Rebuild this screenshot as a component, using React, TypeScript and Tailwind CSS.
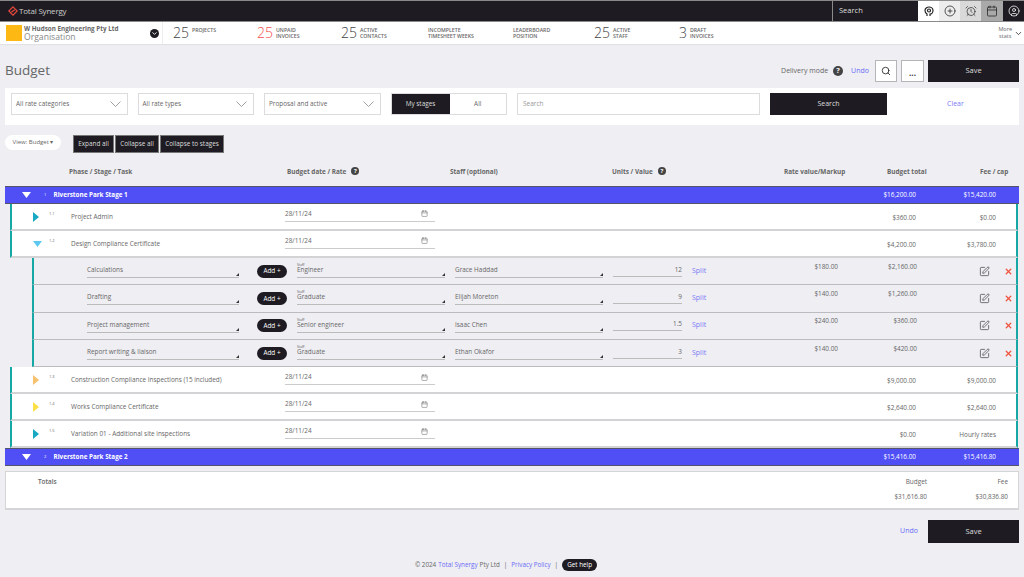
import { AlarmClock, Calendar, ChevronDown, CirclePlus, CircleUser, Search, SquarePen, X } from "lucide-react";

const FONT = "font-['Open_Sans',sans-serif]";

const STATS = [
  { value: "25", line1: "PROJECTS", line2: "", w: "w-[84px]", red: false },
  { value: "25", line1: "UNPAID", line2: "INVOICES", w: "w-[84px]", red: true },
  { value: "25", line1: "ACTIVE", line2: "CONTACTS", w: "w-[87px]", red: false },
  { value: "", line1: "INCOMPLETE", line2: "TIMESHEET WEEKS", w: "w-[85px]", red: false },
  { value: "", line1: "LEADERBOARD", line2: "POSITION", w: "w-[81px]", red: false },
  { value: "25", line1: "ACTIVE", line2: "STAFF", w: "w-[85px]", red: false },
  { value: "3", line1: "DRAFT", line2: "INVOICES", w: "w-[85px]", red: false },
];

const TASKS = [
  { name: "Calculations", role: "Engineer", person: "Grace Haddad", units: "12", rate: "$180.00", total: "$2,160.00" },
  { name: "Drafting", role: "Graduate", person: "Elijah Moreton", units: "9", rate: "$140.00", total: "$1,260.00" },
  { name: "Project management", role: "Senior engineer", person: "Isaac Chen", units: "1.5", rate: "$240.00", total: "$360.00" },
  { name: "Report writing & liaison", role: "Graduate", person: "Ethan Okafor", units: "3", rate: "$140.00", total: "$420.00" },
];

function Arrow({ color, open }: { color: string; open?: boolean }) {
  if (open) {
    return (
      <svg width="9" height="6" viewBox="0 0 9 6" className="block">
        <path d="M0 0h9L4.5 6z" fill={color} />
      </svg>
    );
  }
  return (
    <svg width="6" height="10" viewBox="0 0 6 10" className="block">
      <path d="M0 0l6 5-6 5z" fill={color} />
    </svg>
  );
}

function HelpDot({ size = "small" }: { size?: "small" | "large" }) {
  return (
    <span
      className={`inline-flex shrink-0 items-center justify-center rounded-full bg-[#444] font-bold leading-none text-white ${
        size === "large" ? "h-[10px] w-[10px] text-[7.5px]" : "h-[8px] w-[8px] text-[6px]"
      }`}
    >
      ?
    </span>
  );
}

function Select({ label }: { label: string }) {
  return (
    <div className="flex h-[22px] w-[116.5px] items-center justify-between border border-[#dcdcdf] bg-white pl-[4px] pr-[6px] text-[6.4px] text-[#666]">
      <span>{label}</span>
      <svg width="11" height="6" viewBox="0 0 11 6" fill="none" stroke="#888" strokeWidth="0.8">
        <path d="M.5.5l5 5 5-5" />
      </svg>
    </div>
  );
}

function Corner() {
  return <span className="absolute bottom-[1px] right-0 h-0 w-0 border-b-[3px] border-l-[3px] border-b-[#333] border-l-transparent" />;
}

function StageRow({ num, title, total, fee }: { num: string; title: string; total: string; fee: string }) {
  return (
    <div className="flex h-[18px] w-[1014px] items-center border-y border-[#55556a] bg-[#4f4ff5] text-white">
      <span className="ml-[17px] w-[22px]">
        <Arrow color="#fff" open />
      </span>
      <span className="w-[9.5px] text-[4px]">{num}</span>
      <span className="w-[818.5px] text-[6.3px] font-bold">{title}</span>
      <span className="w-[44px] text-right text-[6.4px]">{total}</span>
      <span className="w-[80px] text-right text-[6.4px]">{fee}</span>
    </div>
  );
}

function PhaseRow(props: { num: string; title: string; color: string; open?: boolean; total: string; fee: string }) {
  return (
    <div className="ml-[10px] flex h-[27px] w-[1008px] items-center border-x-2 border-b-2 border-x-[#17a8a6] border-b-[#d3d3d6] bg-white text-[6.4px] text-[#666]">
      <span className="ml-[21px] w-[16px]">
        <Arrow color={props.color} open={props.open} />
      </span>
      <span className="mb-[5px] w-[22px] text-[4px]">{props.num}</span>
      <span className="mt-[1px] w-[214px]">{props.title}</span>
      <div className="mb-[2px] flex w-[150px] items-center justify-between border-b border-[#ccc] pb-[2px]">
        <span>28/11/24</span>
        <Calendar size={7} className="mr-[7px] text-[#777]" />
      </div>
      <span className="mt-[3px] w-[481px] text-right">{props.total}</span>
      <span className="mt-[3px] w-[80px] text-right">{props.fee}</span>
    </div>
  );
}

function TaskRow({ name, role, person, units, rate, total }: (typeof TASKS)[number]) {
  return (
    <div className="ml-[32px] flex h-[27.3px] w-[986px] items-center border-x-2 border-b border-x-[#17a8a6] border-b-[#bcbcc0] text-[6.4px] text-[#666]">
      <div className="relative ml-[53px] mt-[1px] flex h-[13px] w-[152px] items-start border-b border-[#bbb]">
        {name}
        <Corner />
      </div>
      <button className="ml-[18px] h-[13px] w-[30px] rounded-full bg-[#1e1c22] text-[6.4px] text-white">Add +</button>
      <div className="relative ml-[10px] mt-[1px] h-[13px] w-[148px] border-b border-[#bbb] leading-[10px]">
        <span className="absolute -top-[3px] left-0 text-[3.5px] leading-[5px]">Staff</span>
        {role}
        <Corner />
      </div>
      <div className="relative ml-[10px] mt-[1px] h-[13px] w-[148px] border-b border-[#bbb] leading-[10px]">
        {person}
        <Corner />
      </div>
      <div className="mb-[1px] ml-[10px] h-[12px] w-[69px] border-b border-[#bbb] text-right leading-[10px]">{units}</div>
      <span className="ml-[10px] w-[29px] text-[7px] text-[#7b7bf5]">Split</span>
      <span className="mb-[9px] w-[117px] text-right">{rate}</span>
      <span className="mb-[9px] w-[79px] text-right">{total}</span>
      <SquarePen size={11} strokeWidth={1.6} className="ml-[62px] text-[#444]" />
      <X size={9} strokeWidth={3.5} className="ml-[14px] text-[#f0553f]" />
    </div>
  );
}

export default function App() {
  return (
    <div className={`${FONT} h-[577px] w-[1024px] overflow-hidden bg-[#eeeef3] text-[#666]`}>
      <header className="flex h-[22px] items-stretch border-y border-[#8a8a8a] bg-[#1e1c22] text-[#ddd]">
        <div className="ml-[8px] flex items-center gap-[1px] text-[8px] tracking-tight text-[#ccc]">
          <svg width="10" height="10" viewBox="0 0 10 10" fill="none" stroke="#e5483d" strokeWidth="1.2">
            <path d="M5 .8L9.2 5 5 9.2.8 5z" />
            <path d="M3.3 6.2L6.7 3.8" />
          </svg>
          Total Synergy
        </div>
        <div className="ml-auto flex w-[86px] items-center border-l border-[#8a8a8a] pl-[6px] text-[7.5px]">Search</div>
        <div className="flex w-[21px] items-center justify-center bg-white text-[#222]">
          <svg width="10" height="11" viewBox="0 0 10 11" fill="none" stroke="currentColor" strokeWidth="1.2">
            <path d="M3 10V8C1.5 7 1 5.8 1 4.5 1 2.5 3 1 5 1s4 1.5 4 3.5C9 6.5 7.5 8 6 8v2" />
            <circle cx="5" cy="4.5" r="1.5" />
          </svg>
        </div>
        <div className="flex w-[21px] items-center justify-center bg-[#ececec] text-[#222]">
          <CirclePlus size={12} strokeWidth={1.5} />
        </div>
        <div className="flex w-[21px] items-center justify-center bg-[#d9d9d9] text-[#333]">
          <AlarmClock size={12} strokeWidth={1.5} />
        </div>
        <div className="flex w-[22px] items-center justify-center bg-[#a9a9a9] text-[#222]">
          <Calendar size={12} strokeWidth={1.5} />
        </div>
        <div className="flex w-[21px] items-center justify-center bg-[#1e1c22] text-white">
          <CircleUser size={12} strokeWidth={1.5} />
        </div>
      </header>

      <div className="flex h-[22px] items-center bg-white shadow-[0_1px_1px_#e2e2e6]">
        <div className="ml-[6px] h-[16px] w-[16px] bg-[#fdb813]" />
        <div className="ml-[2px] w-[126px]">
          <div className="text-[6.3px] font-bold leading-[7px] text-[#666]">W Hudson Engineering Pty Ltd</div>
          <div className="text-[8.6px] leading-[10px] text-[#888]">Organisation</div>
        </div>
        <span className="flex h-[9px] w-[9px] items-center justify-center rounded-full bg-[#1e1c22] text-white">
          <ChevronDown size={7} strokeWidth={3} />
        </span>
        <div className="ml-[3px] flex h-full items-center border-l border-[#eee] pl-[10px]">
          {STATS.map((s) => (
            <div key={s.line1 + s.line2} className={`flex ${s.w} items-center gap-[3px]`}>
              {s.value && (
                <span className={`text-[14px] font-light leading-none ${s.red ? "text-[#f4504f]" : "text-[#444]"}`}>{s.value}</span>
              )}
              <span className={`whitespace-nowrap text-[5.2px] font-semibold leading-[6px] text-[#666] ${s.line2 ? "" : "mb-[6px]"}`}>
                {s.line1}
                {s.line2 && <br />}
                {s.line2}
              </span>
            </div>
          ))}
        </div>
        <div className="ml-auto flex items-center pr-[1px]">
          <span className="text-center text-[5.5px] leading-[7.5px] text-[#666]">
            More
            <br />
            stats
          </span>
          <ChevronDown size={9} strokeWidth={2} className="ml-[2px] text-[#222]" />
        </div>
      </div>

      <div className="flex h-[44px] items-end pl-[5px] pr-[5px]">
        <h1 className="mb-[8px] text-[13.5px] text-[#666]">Budget</h1>
        <div className="mb-[6px] ml-auto flex items-center">
          <span className="text-[7px] text-[#666]">Delivery mode</span>
          <span className="ml-[5px] flex">
            <HelpDot size="large" />
          </span>
          <span className="ml-[8px] text-[7px] text-[#6b6bf5]">Undo</span>
          <div className="ml-[6px] flex h-[22px] w-[22px] items-center justify-center border border-[#b5b5b8] bg-white">
            <Search size={10} strokeWidth={2} className="text-[#222]" />
          </div>
          <div className="ml-[4px] flex h-[22px] w-[23px] items-center justify-center border border-[#b5b5b8] bg-white pt-[3px] text-[8px] font-bold text-[#333]">
            ...
          </div>
          <button className="ml-[4px] h-[22px] w-[91px] bg-[#1e1c22] text-[7.5px] text-[#ddd]">Save</button>
        </div>
      </div>

      <div className="mx-[5px] flex h-[37px] items-start bg-white pl-[6px] pt-[5px]">
        <Select label="All rate categories" />
        <span className="ml-[10px]">
          <Select label="All rate types" />
        </span>
        <span className="ml-[10px]">
          <Select label="Proposal and active" />
        </span>
        <div className="ml-[10px] flex h-[22px] w-[116.5px] border border-[#dcdcdf] text-[6.4px]">
          <span className="flex w-[58px] items-center justify-center bg-[#1e1c22] text-[#ddd]">My stages</span>
          <span className="flex flex-1 items-center justify-center text-[#666]">All</span>
        </div>
        <div className="ml-[10px] flex h-[22px] w-[243px] items-center border border-[#dcdcdf] pl-[5px] text-[6.5px] text-[#999]">Search</div>
        <button className="ml-[10px] h-[22px] w-[117px] bg-[#1e1c22] text-[7px] text-[#ddd]">Search</button>
        <span className="ml-[60px] mt-[6px] text-[7px] text-[#7b7bf5]">Clear</span>
      </div>

      <div className="ml-[5px] mt-[10px] flex h-[18px] items-start">
        <span className="flex h-[15px] w-[56px] items-center justify-center rounded-full bg-white text-[6px] text-[#666]">View: Budget ▾</span>
        <div className="ml-[12px] flex gap-[1px]">
          <button className="h-[18px] w-[41px] border border-[#777] bg-[#1e1c22] text-[6.4px] text-[#ddd]">Expand all</button>
          <button className="h-[18px] w-[44px] border border-[#777] bg-[#1e1c22] text-[6.4px] text-[#ddd]">Collapse all</button>
          <button className="h-[18px] w-[64px] border border-[#777] bg-[#1e1c22] text-[6.4px] text-[#ddd]">Collapse to stages</button>
        </div>
      </div>

      <div className="flex h-[33px] items-center whitespace-nowrap pl-[69px] pt-[4px] text-[6.4px] font-bold text-[#666]">
        <span className="w-[218px]">Phase / Stage / Task</span>
        <span className="flex w-[163px] items-center gap-[5px]">
          Budget date / Rate <HelpDot />
        </span>
        <span className="w-[162px]">Staff (optional)</span>
        <span className="flex w-[172px] items-center gap-[5px]">
          Units / Value <HelpDot />
        </span>
        <span className="w-[66px]">Rate value/Markup</span>
        <span className="ml-[37px] w-[41px]">Budget total</span>
        <span className="ml-[52px]">Fee / cap</span>
      </div>

      <div className="ml-[5px]">
        <StageRow num="1" title="Riverstone Park Stage 1" total="$16,200.00" fee="$15,420.00" />
      </div>
      <PhaseRow num="1.1" title="Project Admin" color="#17a8c4" total="$360.00" fee="$0.00" />
      <PhaseRow num="1.2" title="Design Compliance Certificate" color="#5cc8f0" open total="$4,200.00" fee="$3,780.00" />
      {TASKS.map((t) => (
        <TaskRow key={t.name} {...t} />
      ))}
      <PhaseRow num="1.3" title="Construction Compliance Inspections (15 included)" color="#f5c16c" total="$9,000.00" fee="$9,000.00" />
      <PhaseRow num="1.4" title="Works Compliance Certificate" color="#fce045" total="$2,640.00" fee="$2,640.00" />
      <PhaseRow num="1.5" title="Variation 01 - Additional site inspections" color="#17a8c4" total="$0.00" fee="Hourly rates" />
      <div className="ml-[5px]">
        <StageRow num="2" title="Riverstone Park Stage 2" total="$15,416.00" fee="$15,416.80" />
      </div>

      <div className="mx-[5px] mt-[5px] flex h-[39px] justify-between border border-b-2 border-[#d5d5d8] bg-white pl-[32px] pr-[10px] pt-[5px] text-[6.4px] text-[#666]">
        <span className="font-semibold">Totals</span>
        <div className="flex text-right">
          <div className="flex w-[81px] flex-col gap-[5px]">
            <span>Budget</span>
            <span>$31,616.80</span>
          </div>
          <div className="flex w-[81px] flex-col gap-[5px]">
            <span>Fee</span>
            <span>$30,836.80</span>
          </div>
        </div>
      </div>

      <div className="mr-[5px] mt-[10px] flex items-center justify-end">
        <span className="mr-[10px] text-[7px] text-[#6b6bf5]">Undo</span>
        <button className="h-[23px] w-[91px] bg-[#1e1c22] text-[7.5px] text-[#ddd]">Save</button>
      </div>

      <div className="mt-[16px] flex items-center justify-center pr-[12px] text-[6.3px] text-[#666]">
        <span>© 2024</span>
        <span className="ml-[2px] text-[#6b6bf5]">Total Synergy</span>
        <span className="ml-[2px]">Pty Ltd</span>
        <span className="mx-[4px]">|</span>
        <span className="text-[#6b6bf5]">Privacy Policy</span>
        <span className="mx-[4px]">|</span>
        <span className="flex h-[12px] w-[35px] items-center justify-center rounded-full bg-[#1e1c22] text-[6.3px] text-white">Get help</span>
      </div>
    </div>
  );
}
